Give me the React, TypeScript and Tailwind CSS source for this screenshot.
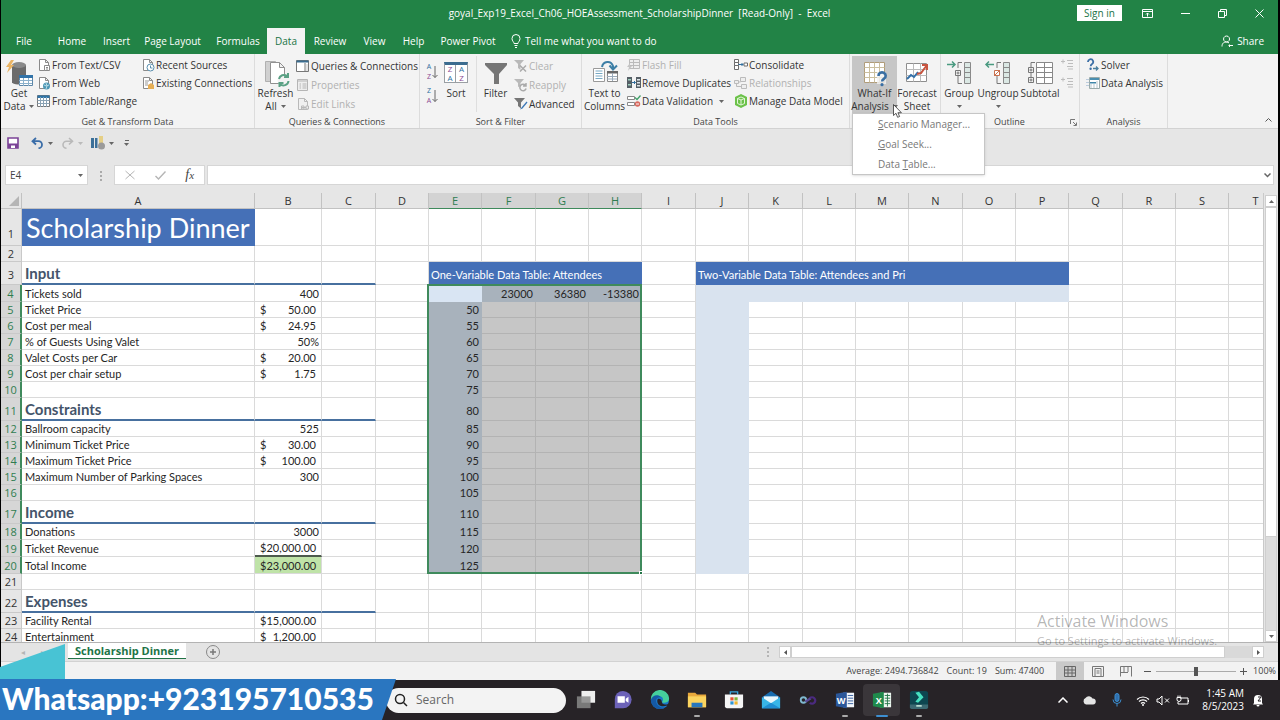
import { useState } from "react";
import type { ReactNode } from "react";
import clsx from "clsx";

type Row = {
  n: number;
  h: string;
  a?: string;
  b?: string;
  kind?: "title" | "heading";
  money?: boolean;
  e?: string;
};

const rows: Row[] = [
  { n: 1, h: "h-[37px]", a: "Scholarship Dinner", kind: "title" },
  { n: 2, h: "h-4" },
  { n: 3, h: "h-[23px]", a: "Input", kind: "heading" },
  { n: 4, h: "h-[17px]", a: "Tickets sold", b: "400" },
  { n: 5, h: "h-4", a: "Ticket Price", b: "50.00", money: true, e: "50" },
  { n: 6, h: "h-4", a: "Cost per meal", b: "24.95", money: true, e: "55" },
  { n: 7, h: "h-4", a: "% of Guests Using Valet", b: "50%", e: "60" },
  { n: 8, h: "h-4", a: "Valet Costs per Car", b: "20.00", money: true, e: "65" },
  { n: 9, h: "h-4", a: "Cost per chair setup", b: "1.75", money: true, e: "70" },
  { n: 10, h: "h-4", e: "75" },
  { n: 11, h: "h-[23px]", a: "Constraints", kind: "heading", e: "80" },
  { n: 12, h: "h-4", a: "Ballroom capacity", b: "525", e: "85" },
  { n: 13, h: "h-4", a: "Minimum Ticket Price", b: "30.00", money: true, e: "90" },
  { n: 14, h: "h-4", a: "Maximum Ticket Price", b: "100.00", money: true, e: "95" },
  { n: 15, h: "h-4", a: "Maximum Number of Parking Spaces", b: "300", e: "100" },
  { n: 16, h: "h-4", e: "105" },
  { n: 17, h: "h-[23px]", a: "Income", kind: "heading", e: "110" },
  { n: 18, h: "h-4", a: "Donations", b: "3000", e: "115" },
  { n: 19, h: "h-[17px]", a: "Ticket Revenue", b: "20,000.00", money: true, e: "120" },
  { n: 20, h: "h-[17px]", a: "Total Income", b: "23,000.00", money: true, e: "125" },
  { n: 21, h: "h-4" },
  { n: 22, h: "h-[23px]", a: "Expenses", kind: "heading" },
  { n: 23, h: "h-4", a: "Facility Rental", b: "15,000.00", money: true },
  { n: 24, h: "h-4", a: "Entertainment", b: "1,200.00", money: true },
];

const cols = "ABCDEFGHIJKLMNOPQRST".split("");
const wide = ["C", "F", "I", "K", "N", "Q", "T"];
const formulas: Record<string, string> = { F: "23000", G: "36380", H: "-13380" };

function Caret({ className = "fill-[#666]" }: { className?: string }) {
  return (
    <svg viewBox="0 0 5 3" className={clsx("inline-block h-[3px] w-[5px] shrink-0", className)}>
      <path d="M0 0h5L2.5 3z" />
    </svg>
  );
}

/* Ribbon icons */

const page = <path d="M2.5 1.5h6l3 3v8h-9z M8.5 1.5v3h3" fill="#fff" stroke="#8a8a8a" />;

const icons: Record<string, ReactNode> = {
  csv: <>{page}<path d="M7.500 7.500h5v5h-5z M9 9.500h2 M9 11h2" fill="#fff" stroke="#8a8a8a" /></>,
  web: <>{page}<circle cx="9.500" cy="10" r="3.500" fill="#4d97b5" /><path d="M7 9q2 2 5 0M9 7q2 3 0 6" stroke="#b9dbe4" fill="none" /></>,
  range: <><path d="M.5 1.500h12v11H.5z" fill="#fff" stroke="#777" /><path d="M.5 1.500h12v2.500H.5z" fill="#2f75a8" /><path d="M.5 6.500h12M.5 9.500h12M3.500 3v10M6.500 3v10M9.500 3v10" stroke="#8aa3b5" /></>,
  recent: <>{page}<circle cx="9.500" cy="9.500" r="3.500" fill="#fff" stroke="#5a8fae" /><path d="M9.500 7.500v2.500h2" fill="none" stroke="#5a8fae" /></>,
  existing: <>{page}<path d="M4 5h4M4 7h3M4 9h3" stroke="#999" /><path d="M7 9l3-2 3 2v4H7z" fill="#e6ae55" /></>,
  queries: <><path d="M.5 1.500h12v11H.5z" fill="#fff" stroke="#777" /><path d="M.5 1.500h12v2H.5z" fill="#3b6c8f" /><path d="M9 4v8" stroke="#777" /><path d="M10 5h2v7h-2z" fill="#e3e3e3" /></>,
  properties: <><path d="M1.500 1.500h10v11h-10z" fill="#eee" stroke="#b5b5b5" /><path d="M1.500 3h10M3.500 6h1.500M3.500 8h1.500M3.500 10h1.500M6.500 6h4M6.500 8h4M6.500 10h4" stroke="#b5b5b5" /></>,
  links: <><path d="M2.500 1.500h6l3 3v8h-9z M8.500 1.500v3h3" fill="#f0f0f0" stroke="#b9b9b9" /><path d="M6 10.500h4M5.500 9h2.500v3H5.500zM10 9h2.500v3H10z" fill="#eee" stroke="#b9b9b9" /></>,
  clear: <><path d="M0 1h10L6.500 5v6L4 9V5z" fill="#b9b9b9" /><path d="M6 6.500l6 6M12 6.500l-6 6" stroke="#aaa" strokeWidth="1.500" /></>,
  reapply: <><path d="M0 1h10L6.500 5v3L4 9V5z" fill="#b9b9b9" /><path d="M11.500 7.500a3.200 3.200 0 1 0 .6 3M12 5v3H9" fill="none" stroke="#aaa" strokeWidth="1.500" /></>,
  advanced: <><path d="M0 1h11L7 5.500v6L4 9V5.500z" fill="#767676" /><path d="M12.500 4.500l-5 6-1.500 2 2.500-1 5-6z" fill="#3c77b5" /></>,
  flash: <><path d="M2.500 1.500h10v9h-10zM2.500 4.500h10M2.500 7.500h10M6.500 1.500v9" fill="#eee" stroke="#bbb" /><path d="M3 5L0 9h2l-1 4 4-5H3z" fill="#c4c4c4" /></>,
  duplicates: <><path d="M0 1h5v11H0zM9 1h5v11H9z" fill="#555f66" /><path d="M1 3h3v1.500H1zM1 8h3v1.500H1z" fill="#9fd0bd" /><path d="M10 3h3v1.500h-3zM10 6h3v1.500h-3zM10 9h3v1.500h-3z" fill="#dfe6ea" /><path d="M5 6.500h3.500M7 5l1.500 1.500L7 8" fill="none" stroke="#2f6f9f" /></>,
  validation: <><path d="M.5 2.500h7v3h-7zM.5 8.500h7v3h-7z" fill="#fff" stroke="#888" /><path d="M8 3.500l2 2 3.500-4" fill="none" stroke="#3f9f68" strokeWidth="1.300" /><circle cx="10.500" cy="10" r="2.700" fill="#d7695e" /><path d="M9 10h3" stroke="#fff" /></>,
  consolidate: <><path d="M.5 1.500h4v3h-4zM.5 4.500h4v3h-4zM.5 7.500h4v4h-4zM10 5h3.500v3H10z" fill="#fff" stroke="#6d6d6d" /><path d="M4.500 6.500H9M7.500 5L9 6.500 7.500 8" fill="none" stroke="#2f6f9f" /></>,
  relationships: <path d="M.5 4.500h4v3h-4zM6.500 1.500h5v4h-5zM7.500 8.500h5v4h-5zM4.500 6h2M2.500 7.500v3h5" fill="#eee" stroke="#bbb" />,
  model: <><path d="M1 3l6-3 6 3v8l-6 3-6-3z" fill="#6cc24a" /><path d="M3.500 4.500L7 3l3.500 1.500v5L7 11l-3.500-1.500zM7 6v5M3.500 4.500L7 6l3.500-1.500" fill="none" stroke="#e2f5d8" /></>,
  solver: <><path d="M2 4a2.600 2.600 0 1 1 4 2c-1 .6-1.300 1-1.300 2.300" fill="none" stroke="#3b6ea5" strokeWidth="1.800" /><circle cx="4.600" cy="10.700" r="1.200" fill="#3b6ea5" /><path d="M7 10.500h5M10 8.500l2 2-2 2" fill="none" stroke="#4a7f9f" strokeWidth="1.300" /></>,
  analysis: <><path d="M3.500 1.500h10v11h-10z" fill="#fff" stroke="#9aa" /><path d="M4 2h9v2H4z" fill="#4a8fb0" /><path d="M0 3.500h3M0 6.500h3M0 9.500h3" stroke="#bcd" /><path d="M4 6h6v1.500H4z" fill="#3f86a8" /><path d="M5 8v4M8 8v4M11 5v7" stroke="#b5c5cc" /></>,
};

function SmallButton({ icon, label, disabled, caret }: { icon: string; label: string; disabled?: boolean; caret?: boolean }) {
  return (
    <button disabled={disabled}
      className={clsx("flex h-[18px] items-center whitespace-nowrap text-[10px]", disabled ? "text-[#b1b1b1]" : "text-[#333]")}>
      <svg viewBox="0 0 14 14" className="mr-px h-3.5 w-3.5 shrink-0">{icons[icon]}</svg>
      {label}
      {caret && <Caret className="ml-1.5 fill-[#666]" />}
    </button>
  );
}

function BigButton({ icon, lines, width, active, caret }: { icon: ReactNode; lines: string[]; width: string; active?: boolean; caret?: boolean }) {
  return (
    <button className={clsx("flex h-[57px] shrink-0 flex-col items-center whitespace-nowrap pt-[3px] text-[10px] leading-[13px] text-[#333]", width, active && "bg-[#c6c6c6]")}>
      <svg viewBox="0 0 28 28" className="h-7 w-7 shrink-0">{icon}</svg>
      <span>{lines[0]}</span>
      <span className="flex h-[13px] items-center gap-1">
        {lines[1]}
        {caret && <Caret />}
      </span>
    </button>
  );
}

function Group({ label, width, launcher, children }: { label: string; width: string; launcher?: boolean; children: ReactNode }) {
  return (
    <section className={clsx("flex shrink-0 flex-col border-r border-[#dcdcdc] pt-0.5", width)}>
      <div className="flex h-[58px]">{children}</div>
      <div className="flex h-3.5 items-center pt-0.5 text-[9px] text-[#444]">
        <span className="flex-1 text-center">{label}</span>
        {launcher && (
          <button aria-label="Outline settings" className="-ml-2 mr-0.5">
            <svg viewBox="0 0 7 7" className="h-[7px] w-[7px]"><path d="M.5 5V.5H5M3 3l3 3M6.500 3.500v3h-3" fill="none" stroke="#777" /></svg>
          </button>
        )}
      </div>
    </section>
  );
}

const bigIcons = {
  getData: (
    <>
      <path d="M7 6h14v18H7z" fill="#6b6b6b" /><ellipse cx="14" cy="6" rx="7" ry="3" fill="#8a8a8a" /><ellipse cx="13" cy="23" rx="6" ry="2.500" fill="#6b6b6b" />
      <path d="M6 1L1 8h3l-2 6 7-8H6l3-5z" fill="#eab464" />
      <path d="M14.500 16.500h13v10h-13z" fill="#fff" stroke="#5d87a8" /><path d="M14 16h14v3H14z" fill="#3273a8" /><path d="M14 21.500h13M14 24.500h13M18.500 19v8M23.500 19v8" stroke="#8bb1cc" />
    </>
  ),
  refresh: (
    <>
      <path d="M3.500 2.500h10l3 3v17h-13z" fill="#d0d0d0" stroke="#b0b0b0" />
      <path d="M8.500 3.500h9l5 5v16h-14z M17.500 3.500v5h5" fill="#fff" stroke="#909090" />
      <circle cx="21.500" cy="21" r="6" fill="#f3f3f3" />
      <path d="M17 20a5 5 0 0 1 8-3M26 14v4h-4M26.500 22a5 5 0 0 1-8.500 3M17.500 28v-4h4" fill="none" stroke="#5aa184" strokeWidth="2" />
    </>
  ),
  filter: <path d="M3 4h22v2l-8 9v10h-5V15L3 6z" fill="#767676" />,
  columns: (
    <>
      <path d="M2.500 9.500h11v13h-11z" fill="#fff" stroke="#9a9a9a" /><path d="M4.500 12h7M4.500 14.500h7M4.500 17h7M4.500 19.500h7" stroke="#78a9c5" />
      <path d="M16.500 12.500h10v10h-10z" fill="#fff" stroke="#8a8a8a" /><path d="M16 12h11v2.500H16z" fill="#666" /><path d="M16 17.500h10M16 20h10M21.500 14v8" stroke="#9ab" />
      <path d="M11 8c1-6 9-7 11-1v2M18.500 6.500l3.500 4 4-4" fill="none" stroke="#3d7fa6" strokeWidth="2" />
    </>
  ),
  whatIf: (
    <>
      <path d="M3.500 3.500h20v20h-20z" fill="#fff" stroke="#b09c7a" /><path d="M3.500 8.500h20M3.500 13.500h20M3.500 18.500h20M8.500 3.500v20M13.500 3.500v20M18.500 3.500v20" stroke="#cbbf9f" />
      <path d="M16 13h9v12h-9z" fill="#f1f1f1" fillOpacity=".8" />
      <path d="M17.500 17a3.600 3.400 0 1 1 5.600 2.600c-1.500 1-2 1.400-2 2.900" fill="none" stroke="#3a6fa3" strokeWidth="2.600" /><circle cx="21" cy="25.700" r="1.600" fill="#3a6fa3" />
    </>
  ),
  forecast: (
    <>
      <path d="M3.500 4.500h20v18h-20z" fill="#fff" stroke="#8e8e8e" /><path d="M3.500 10.500h20M3.500 16.500h20M10.500 4.500v18M17.500 4.500v18" stroke="#bbb" />
      <path d="M4 20l4-4 3 2 4-5" fill="none" stroke="#3470a8" strokeWidth="2" /><path d="M14 15l4-1 6-8M19 6h5v5" fill="none" stroke="#c7543f" strokeWidth="2" />
    </>
  ),
  group: (
    <>
      <path d="M2 5.500h8M7 2.500l3 3-3 3" fill="none" stroke="#4a9a80" strokeWidth="1.500" />
      <path d="M19.500 3.500h6v21h-6z" fill="#dbe8e4" stroke="#8a8a8a" /><path d="M19.500 8.500h6M19.500 13.500h6M19.500 18.500h6" stroke="#8a8a8a" />
      <path d="M10.500 11.500h5v5h-5zM11.500 14h3M13 12.500v3M13 9V3.500h4M13 17v7.500h4" fill="none" stroke="#777" />
    </>
  ),
  ungroup: (
    <>
      <path d="M10 5.500H2M5 2.500l-3 3 3 3" fill="none" stroke="#4a9a80" strokeWidth="1.500" />
      <path d="M19.500 3.500h6v21h-6z" fill="#dbe8e4" stroke="#8a8a8a" /><path d="M19.500 8.500h6M19.500 13.500h6M19.500 18.500h6" stroke="#8a8a8a" />
      <path d="M10.500 11.500h5v5h-5zM10 17l6-6" fill="#fff" stroke="#c8704e" /><path d="M13 9V3.500h4M13 17v7.500h4" fill="none" stroke="#777" />
    </>
  ),
  subtotal: (
    <>
      <path d="M10.500 3.500h16v21h-16z" fill="#fff" stroke="#888" /><path d="M10.500 8.500h16M10.500 13.500h16M10.500 18.500h16M18.500 3.500v21" stroke="#888" />
      <path d="M2.500 8.500h5v5h-5zM2.500 18.500h5v5h-5zM5 9.500v3M3.500 11h3M5 19.500v3M3.500 21h3M5 8V3.500h4M5 14v4" fill="none" stroke="#777" />
    </>
  ),
};

function SortArrow({ top, bottom, label }: { top: string; bottom: string; label: string }) {
  return (
    <button aria-label={label} className="flex h-6 items-center text-[7px] leading-[10px]">
      <span className="flex w-1.5 flex-col">
        <span className="text-[#2f6f9f]">{top}</span>
        <span className="text-[#8b4a92]">{bottom}</span>
      </span>
      <svg viewBox="0 0 6 14" className="h-3.5 w-1.5"><path d="M3 1v11.500M.5 10L3 12.500 5.500 10" fill="none" stroke="#666" /></svg>
    </button>
  );
}

function SortButton() {
  return (
    <button className="flex w-7 flex-col items-center pt-1.5 text-[10px] leading-[13px] text-[#333]">
      <span className="mb-1 grid h-[21px] w-6 grid-cols-2 border border-t-[3px] border-[#9a9fa3] border-t-[#3b6c8f] bg-white text-center text-[8px] leading-[8px]">
        <span className="border-r border-[#9a9fa3] text-[#8b4a92]">Z</span>
        <span className="text-[#2f6f9f]">A</span>
        <span className="border-r border-[#9a9fa3] text-[#2f6f9f]">A</span>
        <span className="text-[#8b4a92]">Z</span>
      </span>
      Sort
    </button>
  );
}

function Ribbon() {
  return (
    <div className="flex h-[75px] border-b border-[#d2d2d2] bg-[#f3f3f3]">
      <Group label="Get & Transform Data" width="w-[254px]">
        <BigButton icon={bigIcons.getData} lines={["Get", "Data"]} width="w-9" caret />
        <div className="w-[104px]">
          <SmallButton icon="csv" label="From Text/CSV" />
          <SmallButton icon="web" label="From Web" />
          <SmallButton icon="range" label="From Table/Range" />
        </div>
        <div>
          <SmallButton icon="recent" label="Recent Sources" />
          <SmallButton icon="existing" label="Existing Connections" />
        </div>
      </Group>
      <Group label="Queries & Connections" width="w-[165px]">
        <BigButton icon={bigIcons.refresh} lines={["Refresh", "All"]} width="w-[41px]" caret />
        <div className="flex flex-col gap-px pt-px">
          <SmallButton icon="queries" label="Queries & Connections" />
          <SmallButton icon="properties" label="Properties" disabled />
          <SmallButton icon="links" label="Edit Links" disabled />
        </div>
      </Group>
      <Group label="Sort & Filter" width="w-[162px]">
        <div className="w-[22px] pl-1.5 pt-1">
          <SortArrow top="A" bottom="Z" label="Sort A to Z" />
          <SortArrow top="Z" bottom="A" label="Sort Z to A" />
        </div>
        <SortButton />
        <div className="ml-1.5 h-14 w-px bg-[#dedede]" />
        <BigButton icon={bigIcons.filter} lines={["Filter"]} width="w-[37px]" />
        <div className="flex flex-col gap-px pt-px">
          <SmallButton icon="clear" label="Clear" disabled />
          <SmallButton icon="reapply" label="Reapply" disabled />
          <SmallButton icon="advanced" label="Advanced" />
        </div>
      </Group>
      <Group label="Data Tools" width="w-[268px]">
        <BigButton icon={bigIcons.columns} lines={["Text to", "Columns"]} width="w-[45px]" />
        <div className="w-[107px]">
          <SmallButton icon="flash" label="Flash Fill" disabled />
          <SmallButton icon="duplicates" label="Remove Duplicates" />
          <SmallButton icon="validation" label="Data Validation" caret />
        </div>
        <div>
          <SmallButton icon="consolidate" label="Consolidate" />
          <SmallButton icon="relationships" label="Relationships" disabled />
          <SmallButton icon="model" label="Manage Data Model" />
        </div>
      </Group>
      <Group label="" width="w-[91px]">
        <div className="relative pl-0.5">
          <BigButton icon={bigIcons.whatIf} lines={["What-If", "Analysis"]} width="w-[45px]" active caret />
          <WhatIfMenu />
        </div>
        <BigButton icon={bigIcons.forecast} lines={["Forecast", "Sheet"]} width="w-10" />
      </Group>
      <Group label="Outline" width="w-[139px]" launcher>
        <BigButton icon={bigIcons.group} lines={["Group"]} width="w-9" caret />
        <BigButton icon={bigIcons.ungroup} lines={["Ungroup"]} width="w-[42px]" caret />
        <BigButton icon={bigIcons.subtotal} lines={["Subtotal"]} width="w-[42px]" />
        <div className="flex flex-col gap-1.5 pt-0.5">
          {["Show Detail", "Hide Detail"].map((label) => (
            <button key={label} aria-label={label} disabled>
              <svg viewBox="0 0 12 12" className="h-3 w-3"><path d="M0 3.500h4M2 1.500v4M6 2.500h6M7 5.500h5M6 8.500h6M7 11h5" stroke="#bdbdbd" /></svg>
            </button>
          ))}
        </div>
      </Group>
      <Group label="Analysis" width="w-[88px]">
        <div className="pl-1.5">
          <SmallButton icon="solver" label="Solver" />
          <SmallButton icon="analysis" label="Data Analysis" />
        </div>
      </Group>
      <button aria-label="Collapse ribbon" className="ml-auto self-end p-1.5">
        <svg viewBox="0 0 7 4" className="h-1 w-[7px]"><path d="M.5 3.500l3-3 3 3" fill="none" stroke="#555" /></svg>
      </button>
    </div>
  );
}

function WhatIfMenu() {
  const item = "block h-5 w-full pl-[25px] text-left text-[10px] text-[#777]";
  return (
    <>
      <div role="menu" className="absolute left-0.5 top-[57px] z-20 w-[133px] border border-[#c6c6c6] bg-white shadow">
        <button role="menuitem" className={item}><u>S</u>cenario Manager...</button>
        <button role="menuitem" className={item}><u>G</u>oal Seek...</button>
        <button role="menuitem" className={item}>Data <u>T</u>able...</button>
      </div>
      <svg viewBox="0 0 9 14" className="absolute -bottom-1 left-[43px] z-30 h-3.5 w-[9px]">
        <path d="M.5 .5v11l2.500-2.200 1.600 4 2-.8-1.700-3.800h3.500z" fill="#fff" stroke="#333" strokeWidth=".8" />
      </svg>
    </>
  );
}

const tabs = [
  ["File", "w-[46px]"], ["Home", "w-[50px]"], ["Insert", "w-[39px]"], ["Page Layout", "w-[73px]"],
  ["Formulas", "w-[58px]"], ["Data", "w-[38px]"], ["Review", "w-[50px]"], ["View", "w-[39px]"],
  ["Help", "w-[39px]"], ["Power Pivot", "w-[70px]"],
];

function Header() {
  return (
    <header className="bg-[#228346] text-white">
      <div className="relative flex h-7 items-center justify-end pb-0.5">
        <h1 className="absolute inset-x-0 text-center text-[10px]">
          goyal_Exp19_Excel_Ch06_HOEAssessment_ScholarshipDinner&nbsp; [Read-Only]&nbsp; -&nbsp; Excel
        </h1>
        <div className="relative flex items-center">
          <button className="mr-5 h-4 w-[45px] bg-white text-[10px] leading-4 text-[#217346]">Sign in</button>
          <button aria-label="Ribbon display options" className="mr-7">
            <svg viewBox="0 0 11 9" className="h-[9px] w-[11px]"><path d="M.5 .5h10v8H.5zM.5 2.500h10M5.500 7.500V4M4 5.500L5.500 4 7 5.500" fill="none" stroke="#fff" /></svg>
          </button>
          <button aria-label="Minimize" className="mr-7">
            <svg viewBox="0 0 9 9" className="h-[9px] w-[9px]"><path d="M0 4.500h9" stroke="#fff" /></svg>
          </button>
          <button aria-label="Restore" className="mr-7">
            <svg viewBox="0 0 9 9" className="h-[9px] w-[9px]"><path d="M.5 2.500h6v6h-6zM2.500 2.500v-2h6v6h-2" fill="none" stroke="#fff" /></svg>
          </button>
          <button aria-label="Close" className="mr-3.5">
            <svg viewBox="0 0 9 9" className="h-[9px] w-[9px]"><path d="M.5 .5l8 8M8.500 .5l-8 8" stroke="#fff" /></svg>
          </button>
        </div>
      </div>
      <nav className="flex h-[26px] items-stretch text-[10px]">
        {tabs.map(([name, w]) => (
          <button key={name} className={clsx(w, "whitespace-nowrap", name === "Data" && "bg-[#f3f3f3] text-[#217346]")}>{name}</button>
        ))}
        <button className="ml-2 flex items-center gap-1 whitespace-nowrap">
          <svg viewBox="0 0 10 14" className="h-3.5 w-2.5"><path d="M3 9.500C3 8 1 7 1 4.500a4 4 0 0 1 8 0C9 7 7 8 7 9.500zM3.500 11.500h3M4 13.500h2" fill="none" stroke="#fff" /></svg>
          Tell me what you want to do
        </button>
        <button className="ml-auto mr-3.5 flex items-center gap-1">
          <svg viewBox="0 0 12 12" className="h-3 w-3"><path d="M1 11.500C1 8 3 7 5.500 7c1 0 2 .3 2.500 1M8.500 9.500v2.500M7.500 10.500H12M5.500 7a3 3 0 1 1 .1 0" fill="none" stroke="#fff" /></svg>
          Share
        </button>
      </nav>
    </header>
  );
}

function QuickAccess() {
  return (
    <div className="flex h-7 items-center bg-[#e6e6e6] pl-1.5">
      <button aria-label="Save">
        <svg viewBox="0 0 12 12" className="h-3 w-3"><path d="M1 1h10v10H1z" fill="#fff" stroke="#7b4397" strokeWidth="1.600" /><path d="M1 6.500h10V11H1z" fill="#7b4397" /><path d="M4 8.500h4V11H4z" fill="#fff" /></svg>
      </button>
      <button aria-label="Undo" className="ml-3 flex items-center gap-1">
        <svg viewBox="0 0 13 12" className="h-3 w-[13px]"><path d="M5 1L1.500 4.200 5 7.500M2 4.200h5.500a3.500 3.500 0 0 1 0 7" fill="none" stroke="#3a6da8" strokeWidth="1.800" /></svg>
        <Caret />
      </button>
      <button aria-label="Redo" disabled className="ml-2 flex items-center gap-1">
        <svg viewBox="0 0 13 12" className="h-3 w-[13px]"><path d="M8 1l3.500 3.200L8 7.500M11 4.200H5.500a3.500 3.500 0 0 0 0 7" fill="none" stroke="#b9b9b9" strokeWidth="1.600" /></svg>
        <Caret className="fill-[#bbb]" />
      </button>
      <button aria-label="Touch mode" className="ml-2 flex items-center gap-1">
        <svg viewBox="0 0 14 14" className="h-3.5 w-3.5"><path d="M0 2h3v10H0zM4 2h2.500v10H4z" fill="#3c7099" /><path d="M8 0h4v8H8z" fill="#e5cf86" /><circle cx="10.500" cy="10" r="3.500" fill="#9a9a9a" /></svg>
        <Caret />
      </button>
      <button aria-label="Customize" className="ml-2.5 flex flex-col items-center gap-0.5">
        <span className="h-px w-1 bg-[#666]" />
        <Caret />
      </button>
    </div>
  );
}

function FormulaBar() {
  return (
    <div className="flex h-9 items-start bg-[#e6e6e6] pb-2 pl-1 pr-1 pt-2">
      <div className="flex h-5 w-[83px] items-center border border-[#d6d6d6] bg-white pr-1">
        <input aria-label="Name box" defaultValue="E4" className="w-full min-w-0 pl-1 text-[10px] text-[#444] outline-none" />
        <button aria-label="Name list" className="flex"><Caret /></button>
      </div>
      <svg viewBox="0 0 2 10" className="mx-3 mt-1.5 h-2.5 w-0.5"><path d="M0 0h2v2H0zM0 4h2v2H0zM0 8h2v2H0z" fill="#aaa" /></svg>
      <div className="flex h-5 w-[91px] items-center justify-around border border-[#d6d6d6] bg-white">
        <button aria-label="Cancel"><svg viewBox="0 0 10 10" className="h-2.5 w-2.5"><path d="M.5 1l9 8M9.500 1l-9 8" stroke="#b5b5b5" /></svg></button>
        <button aria-label="Enter"><svg viewBox="0 0 11 9" className="h-[9px] w-[11px]"><path d="M.5 5l3 3 7-7.500" fill="none" stroke="#b5b5b5" strokeWidth="1.400" /></svg></button>
        <button aria-label="Insert function" className="font-['Liberation_Serif',serif] text-sm italic leading-4 text-[#444]">f<span className="text-[11px]">x</span></button>
      </div>
      <div className="ml-0.5 flex h-5 flex-1 items-center border border-[#d6d6d6] bg-white pr-0.5">
        <input aria-label="Formula" className="min-w-0 flex-1 px-1 text-[10px] outline-none" />
        <button aria-label="Expand formula bar">
          <svg viewBox="0 0 7 5" className="h-[5px] w-[7px]"><path d="M.5 .5l3 3 3-3" fill="none" stroke="#666" strokeWidth="1.500" /></svg>
        </button>
      </div>
    </div>
  );
}

const inSelection = (c: string) => "EFGH".includes(c);

function Cell({ row, col }: { row: Row; col: string }) {
  const base = "whitespace-nowrap border-b border-r p-0 align-bottom leading-[14px]";
  const grid = "border-[#dadada]";

  // merged captions above the two data tables
  if (row.n === 3 && col === "E")
    return <td colSpan={4} className={clsx(base, "overflow-hidden border-[#4570b7] bg-[#4570b7] pb-0.5 pl-0.5 text-white")}>One-Variable Data Table: Attendees</td>;
  if (row.n === 3 && col === "J")
    return <td colSpan={4} className={clsx(base, "overflow-hidden border-[#4570b7] bg-[#4570b7] pb-0.5 pl-0.5 text-white")}>Two-Variable Data Table: Attendees and Pri</td>;
  if (row.n === 3 && col === "N")
    return <td colSpan={3} className={clsx(base, "border-[#4570b7] bg-[#4570b7]")} />;
  if (row.n === 3 && "FGHKLMOP".includes(col)) return null;

  if (col === "A") {
    if (row.kind === "title")
      return <td className={clsx(base, "border-[#4570b7] bg-[#4570b7] pl-1 pt-0.5 align-middle text-[27px] leading-[34px] text-white")}>{row.a}</td>;
    if (row.kind === "heading")
      return <td className="whitespace-nowrap border-b-2 border-r border-b-[#47709f] border-r-[#dadada] p-0 pl-[3px] text-[15px] font-bold leading-5 text-[#44546a]">{row.a}</td>;
    return <td className={clsx(base, grid, "pl-[3px]")}>{row.a}</td>;
  }

  if (row.kind === "heading" && (col === "B" || col === "C"))
    return <td className="border-b-2 border-r border-b-[#47709f] border-r-[#dadada] p-0" />;

  if (col === "B" && row.b) {
    return (
      <td className={clsx(base, row.n === 19 ? "border-b-2 border-b-[#4d5a4d] border-r-[#dadada]" : grid, row.n === 20 && "bg-[#bfe3a8]")}>
        {row.money
          ? <div className="flex justify-between px-[5px]"><span>$</span><span>{row.b}</span></div>
          : <div className="pr-0.5 text-right">{row.b}</div>}
      </td>
    );
  }

  if (inSelection(col) && row.n === 4)
    return (
      <td className={clsx(base, "pr-0.5 text-right", col === "E" ? "relative border-[#d9e5f3] bg-[#d9e5f3]" : "border-[#a8b2bc] bg-[#a8b2bc]")}>
        {formulas[col]}
        {col === "E" && (
          <div className="pointer-events-none absolute -left-0.5 -top-px z-10 h-[290px] w-[215px] border-2 border-[#3f8a5c]">
            <span className="absolute -bottom-[3px] -right-[3px] h-1 w-1 border border-white bg-[#217346]" />
          </div>
        )}
      </td>
    );

  if (inSelection(col) && row.n > 4 && row.n <= 20)
    return (
      <td className={clsx(base, "pr-0.5 text-right", col === "E" ? "border-[#a8b2bc] bg-[#a8b2bc]" : "border-[#b3b3b3] bg-[#c6c6c6]", row.kind === "heading" && "pb-0.5")}>
        {col === "E" && row.e}
      </td>
    );

  const shaded = (row.n === 4 && "JKLMNOP".includes(col)) || (col === "J" && row.n > 4 && row.n <= 20);
  return <td className={clsx(base, shaded ? "border-[#d9e3ef] bg-[#d9e3ef]" : grid)} />;
}

function Sheet() {
  return (
    <div className="flex min-h-0 flex-1 bg-[#e6e6e6]">
      <div className="min-w-0 flex-1 overflow-hidden border-r border-[#c9c9c9] bg-white">
        <table className="w-[1261px] table-fixed border-separate border-spacing-0 font-['Lato',sans-serif] text-[11px] text-[#262626]">
          <colgroup>
            <col className="w-[21px]" />
            {cols.map((c) => (
              <col key={c} className={c === "A" ? "w-[233px]" : c === "B" ? "w-[67px]" : wide.includes(c) ? "w-[54px]" : "w-[53px]"} />
            ))}
          </colgroup>
          <thead className="font-['Open_Sans',sans-serif] text-[11px] leading-[15px]">
            <tr className="h-4">
              <th className="border-b border-r border-[#c2c2c2] bg-[#e6e6e6] p-0">
                <svg viewBox="0 0 10 10" className="ml-auto mr-0.5 h-2.5 w-2.5"><path d="M10 0v10H0z" fill="#b5b5b5" /></svg>
              </th>
              {cols.map((c) => (
                <th key={c} className={clsx("border-b border-r p-0 font-normal", inSelection(c)
                  ? "border-b-[#3f8a5c] border-r-[#c2c2c2] bg-[#d3d3d3] text-[#2f7d50]"
                  : "border-[#c2c2c2] bg-[#e6e6e6] text-[#333]")}>{c}</th>
              ))}
            </tr>
          </thead>
          <tbody>
            {rows.map((row) => {
              const picked = row.n >= 4 && row.n <= 20;
              return (
                <tr key={row.n} className={row.h}>
                  <th className={clsx("border-b p-0 align-bottom font-['Open_Sans',sans-serif] text-[11px] font-normal leading-[14px]", picked
                    ? "border-r-2 border-b-[#c9c9c9] border-r-[#3f8a5c] bg-[#d6d6d6] text-[#2f7d50]"
                    : "border-r border-[#c9c9c9] bg-[#e6e6e6] text-[#333]", row.kind === "title" && "pb-1", row.kind === "heading" && "pb-0.5")}>{row.n}</th>
                  {cols.map((c) => <Cell key={c} row={row} col={c} />)}
                </tr>
              );
            })}
          </tbody>
        </table>
      </div>
      <div className="flex w-3.5 flex-col items-center pt-0.5">
        <button aria-label="Scroll up" className="flex h-3 w-3 items-center justify-center border border-[#cfcfcf] bg-white"><Caret className="rotate-180 fill-[#666]" /></button>
        <div className="flex w-3 flex-1 flex-col border-x border-[#cfcfcf] bg-[#dcdcdc]">
          <div className="h-[78%] border-y border-[#cfcfcf] bg-white" />
        </div>
        <button aria-label="Scroll down" className="flex h-3 w-3 items-center justify-center border border-[#cfcfcf] bg-white"><Caret /></button>
      </div>
    </div>
  );
}

function SheetTabs() {
  return (
    <div className="flex h-[19px] border-t border-[#b3b3b3] bg-[#e4e4e4]">
      <div className="flex w-[67px] items-center gap-4 pl-5 text-[8px] text-[#b5b5b5]">
        <button aria-label="Previous sheet">◂</button>
        <button aria-label="Next sheet">▸</button>
      </div>
      <button className="h-4 w-[118px] border-b border-[#217346] bg-white font-['Open_Sans',sans-serif] text-[11px] font-bold leading-[14px] text-[#217346]">Scholarship Dinner</button>
      <button aria-label="New sheet" className="ml-5">
        <svg viewBox="0 0 14 14" className="h-3.5 w-3.5"><circle cx="7" cy="7" r="6.500" fill="none" stroke="#888" /><path d="M7 4v6M4 7h6" stroke="#777" strokeWidth="1.500" /></svg>
      </button>
      <div className="ml-auto flex items-center pr-3.5">
        <svg viewBox="0 0 2 10" className="mr-2.5 h-2.5 w-0.5"><path d="M0 0h2v2H0zM0 4h2v2H0zM0 8h2v2H0z" fill="#b5b5b5" /></svg>
        <button aria-label="Scroll left" className="flex h-3 w-3 items-center justify-center border border-[#cfcfcf] bg-white"><Caret className="rotate-90 fill-[#555]" /></button>
        <div className="h-3 w-[434px] border border-[#cfcfcf] bg-white" />
        <div className="h-3 w-[27px] bg-[#d9d9d9]" />
        <button aria-label="Scroll right" className="flex h-3 w-3 items-center justify-center border border-[#cfcfcf] bg-white"><Caret className="-rotate-90 fill-[#555]" /></button>
      </div>
    </div>
  );
}

function StatusBar() {
  const [zoom, setZoom] = useState(50);
  return (
    <footer className="flex h-[19px] items-center justify-end border-t border-[#d2d2d2] bg-[#f2f2f2] pr-0.5 text-[9px] text-[#444]">
      <span>Average: 2494.736842</span>
      <span className="ml-2">Count: 19</span>
      <span className="ml-2">Sum: 47400</span>
      <button aria-label="Normal view" className="ml-3 flex h-full w-7 items-center justify-center bg-[#c9c9c9]">
        <svg viewBox="0 0 12 11" className="h-[11px] w-3"><path d="M.5 .5h11v10H.5zM.5 4h11M.5 7h11M4 .5v10M8 .5v10" fill="none" stroke="#666" /></svg>
      </button>
      <button aria-label="Page layout view" className="flex w-7 justify-center">
        <svg viewBox="0 0 12 11" className="h-[11px] w-3"><path d="M.5 .5h11v10H.5zM3 2.500h6v8H3zM4.500 5h3M4.500 7h3" fill="none" stroke="#777" /></svg>
      </button>
      <button aria-label="Page break view" className="flex w-7 justify-center">
        <svg viewBox="0 0 12 11" className="h-[11px] w-3"><path d="M.5 10.500V.5h11v10M4 .5V6M8 .5V6M.5 6.500H8" fill="none" stroke="#777" /></svg>
      </button>
      <button aria-label="Zoom out" className="ml-1 flex h-2 w-2 items-center"><span className="block h-px w-[7px] bg-[#555]" /></button>
      <input type="range" aria-label="Zoom" value={zoom} onChange={(e) => setZoom(Number(e.target.value))}
        className="mx-1 h-2.5 w-20 appearance-none bg-transparent [&::-webkit-slider-runnable-track]:h-px [&::-webkit-slider-runnable-track]:bg-[#aaa] [&::-webkit-slider-thumb]:-mt-1 [&::-webkit-slider-thumb]:h-[9px] [&::-webkit-slider-thumb]:w-1 [&::-webkit-slider-thumb]:appearance-none [&::-webkit-slider-thumb]:bg-[#555]" />
      <button aria-label="Zoom in">
        <svg viewBox="0 0 7 7" className="h-[7px] w-[7px]"><path d="M3.500 0v7M0 3.500h7" stroke="#555" /></svg>
      </button>
      <span className="ml-1.5">100%</span>
    </footer>
  );
}

/* Taskbar */

const apps: { name: string; icon: ReactNode; state?: "open" | "active" }[] = [
  { name: "Task view", icon: <><path d="M6 1h15v13H6z" fill="#eee" /><path d="M1 7h15v13H1z" fill="#888" fillOpacity=".85" /></> },
  { name: "Chat", icon: <><path d="M11 1a9.500 9.500 0 1 1 0 19H2V10a9 9 0 0 1 9-9z" fill="#6c62b8" /><path d="M5 7h8v7H5zM14 9.500l3-2v6.500l-3-2z" fill="#fff" /></> },
  { name: "Edge", icon: <><circle cx="11" cy="11" r="10" fill="#1b78c8" /><path d="M1 11A10 10 0 0 1 21 9c0 4-3 5-6 5-2 0-2-1-1-2 1-3-1-5-4-5-4 0-8 2-9 4z" fill="#45cf9c" /><path d="M1 11c1-5 8-7 11-3-5-1-7 4-4 8 2 3 6 4 9 3-7 5-16 0-16-8z" fill="#1559a5" /><path d="M8 12c0 5 5 7 11 5l1-2c-3 2-7 1-7-2 0-3-5-5-5-1z" fill="#272327" /></> },
  { name: "File Explorer", state: "open", icon: <><path d="M1 3h8l2 2h10v14H1z" fill="#e9a93c" /><path d="M1 7h20v12H1z" fill="#fbd45f" /><path d="M5 14h12v5H5z" fill="#2877bd" /></> },
  { name: "Microsoft Store", icon: <><path d="M7 5V2h8v3" fill="none" stroke="#36a5dd" strokeWidth="1.500" /><path d="M1 5h20v13q0 2-2 2H3q-2 0-2-2z" fill="#f5f5f5" /><path d="M7 8h3.500v3.500H7z" fill="#e65332" /><path d="M11.500 8H15v3.500h-3.500z" fill="#7bb63a" /><path d="M7 12.500h3.500V16H7z" fill="#2e96d6" /><path d="M11.500 12.500H15V16h-3.500z" fill="#f1b52e" /></> },
  { name: "Mail", icon: <><path d="M1 8L11 1l10 7v12H1z" fill="#176caf" /><path d="M3 7h16v8H3z" fill="#e9f7fc" /><path d="M1 8l10 6.500L21 8v12H1z" fill="#38b6e8" /><path d="M1 20l10-6 10 6z" fill="#1f8ed3" /></> },
  { name: "Visual Studio", icon: <><circle cx="6" cy="11" r="3" fill="none" stroke="#7fb8cf" strokeWidth="2" /><path d="M8 13l6-4" stroke="#5a4a98" strokeWidth="2.500" /><path d="M13 9a3.500 3.500 0 1 1 0 5" fill="none" stroke="#4b2a80" strokeWidth="2.500" /></> },
  { name: "Word", state: "open", icon: <><path d="M9 3h12v16H9z" fill="#f2f6fb" /><path d="M14 6h6M14 9h6M14 12h6M14 15h6" stroke="#2b579a" /><path d="M1 4l12-2v18L1 18z" fill="#2b579a" /><text x="2" y="15" fontSize="10" fontWeight="700" fontFamily="Open Sans" fill="#fff">W</text></> },
  { name: "Excel", state: "active", icon: <><path d="M9 3h12v16H9z" fill="#eef7f1" /><path d="M14 6h6M14 9h6M14 12h6M14 15h6M17 4v14" stroke="#217346" /><path d="M1 4l12-2v18L1 18z" fill="#1f8a4c" /><text x="4" y="15" fontSize="10" fontWeight="700" fontFamily="Open Sans" fill="#fff">X</text></> },
  { name: "Filmora", state: "open", icon: <><rect x="1" y="1" width="20" height="20" rx="3" fill="#0d4650" /><path d="M1 16h20v3q0 2-2 2H3q-2 0-2-2z" fill="#3c6a73" /><path d="M8 17.500h6" stroke="#dfe" strokeWidth="1.500" /><path d="M7 3l4-1 5 6-6 6-3-1 4-5z" fill="#46e0c0" /></> },
];

function Taskbar() {
  return (
    <div className="flex h-10 items-center bg-[#272327] pl-[386px] text-white">
      <label className="flex h-[25px] w-[180px] items-center gap-2 rounded-full bg-[#f3f3f3] px-2">
        <svg viewBox="0 0 14 14" className="h-3.5 w-3.5 shrink-0"><circle cx="6" cy="6" r="4.500" fill="none" stroke="#222" strokeWidth="1.500" /><path d="M9.500 9.500L13 13" stroke="#222" strokeWidth="1.500" /></svg>
        <input placeholder="Search" aria-label="Search" className="min-w-0 flex-1 text-xs text-[#222] outline-none placeholder:text-[#666]" />
      </label>
      <div className="ml-px flex h-full items-center">
        {apps.map((app) => (
          <button key={app.name} aria-label={app.name}
            className={clsx("relative flex h-8 w-[37px] items-center justify-center rounded", app.state === "active" && "bg-[#3a363a]")}>
            <svg viewBox="0 0 22 22" className="h-5 w-5">{app.icon}</svg>
            {app.state && <span className={clsx("absolute -bottom-px h-0.5 rounded-full", app.state === "active" ? "w-3 bg-[#3d8fd1]" : "w-1.5 bg-[#aaa]")} />}
          </button>
        ))}
      </div>
      <div className="ml-auto flex items-center pr-4">
        <svg viewBox="0 0 10 6" className="mr-3.5 h-1.5 w-2.5"><path d="M.5 5.500l4.500-4.500 4.500 4.500" fill="none" stroke="#fff" strokeWidth="1.500" /></svg>
        <svg viewBox="0 0 14 10" className="mr-4 h-2.5 w-3.5"><path d="M4 9.500a3.500 3.500 0 0 1-.5-6.500 4 4 0 0 1 7 .5 3 3 0 0 1 .5 6z" fill="#e5e5e5" /></svg>
        <svg viewBox="0 0 10 14" className="mr-3.5 h-3.5 w-2.5"><rect x="3" y=".5" width="4" height="8" rx="2" fill="#2f6fae" stroke="#3d8fd1" /><path d="M1 6.500a4 4 0 0 0 8 0M5 10.500v3" fill="none" stroke="#3d8fd1" /></svg>
        <svg viewBox="0 0 14 11" className="mr-1.5 h-[11px] w-3.5"><path d="M1 4.500a8.500 8.500 0 0 1 12 0M3 6.500a5.700 5.700 0 0 1 8 0M5 8.500a2.800 2.800 0 0 1 4 0" fill="none" stroke="#fff" strokeWidth="1.200" /><circle cx="7" cy="10" r="1" fill="#fff" /></svg>
        <svg viewBox="0 0 14 11" className="mr-1.5 h-[11px] w-3.5"><path d="M1 4h2l3-3v9L3 7H1zM9 3.500l4 4M13 3.500l-4 4" fill="none" stroke="#fff" /></svg>
        <svg viewBox="0 0 14 11" className="mr-3 h-[11px] w-3.5"><path d="M4 3h8v6H2V7M12.500 5v2M1 2.500h4v2a2 2 0 0 1-4 0zM2 2.500V.5M4 2.500V.5" fill="none" stroke="#fff" /></svg>
        <div className="mr-2 text-right text-[10px] leading-[13px]">
          <div>1:45 AM</div>
          <div>8/5/2023</div>
        </div>
        <svg viewBox="0 0 12 13" className="h-[13px] w-3"><path d="M2 9V5a4 4 0 0 1 8 0v4l1 1.500H1zM4.500 11h3a1.500 1.500 0 0 1-3 0z" fill="#fff" /><path d="M6 3h3L6 7h3" fill="none" stroke="#272327" /></svg>
      </div>
    </div>
  );
}

function ContactBanner() {
  return (
    <div className="absolute bottom-0 left-0 z-40">
      <svg viewBox="0 0 65 35" className="block h-[35px] w-[65px]"><path d="M0 23L65 0v35H0z" fill="#48c3d4" /></svg>
      <div className="h-[41px] w-[396px] whitespace-nowrap bg-[#2a76c0] pl-0.5 font-['Lato',sans-serif] text-[30px] font-black leading-[38px] text-white [clip-path:polygon(0_0,100%_0,382px_100%,0_100%)]">
        Whatsapp:+923195710535
      </div>
    </div>
  );
}

export default function App() {
  return (
    <div className="relative flex h-screen flex-col overflow-hidden bg-black font-['Open_Sans','Noto_Sans',sans-serif]">
      <div className="flex min-h-0 flex-1 flex-col pl-px pr-0.5">
        <Header />
        <Ribbon />
        <QuickAccess />
        <FormulaBar />
        <Sheet />
        <SheetTabs />
        <StatusBar />
      </div>
      <Taskbar />
      <div className="pointer-events-none absolute bottom-[71px] right-[55px] w-[188px] text-[#000]/30">
        <p className="text-base leading-6">Activate Windows</p>
        <p className="whitespace-nowrap text-[11px] leading-4">Go to Settings to activate Windows.</p>
      </div>
      <ContactBanner />
    </div>
  );
}
